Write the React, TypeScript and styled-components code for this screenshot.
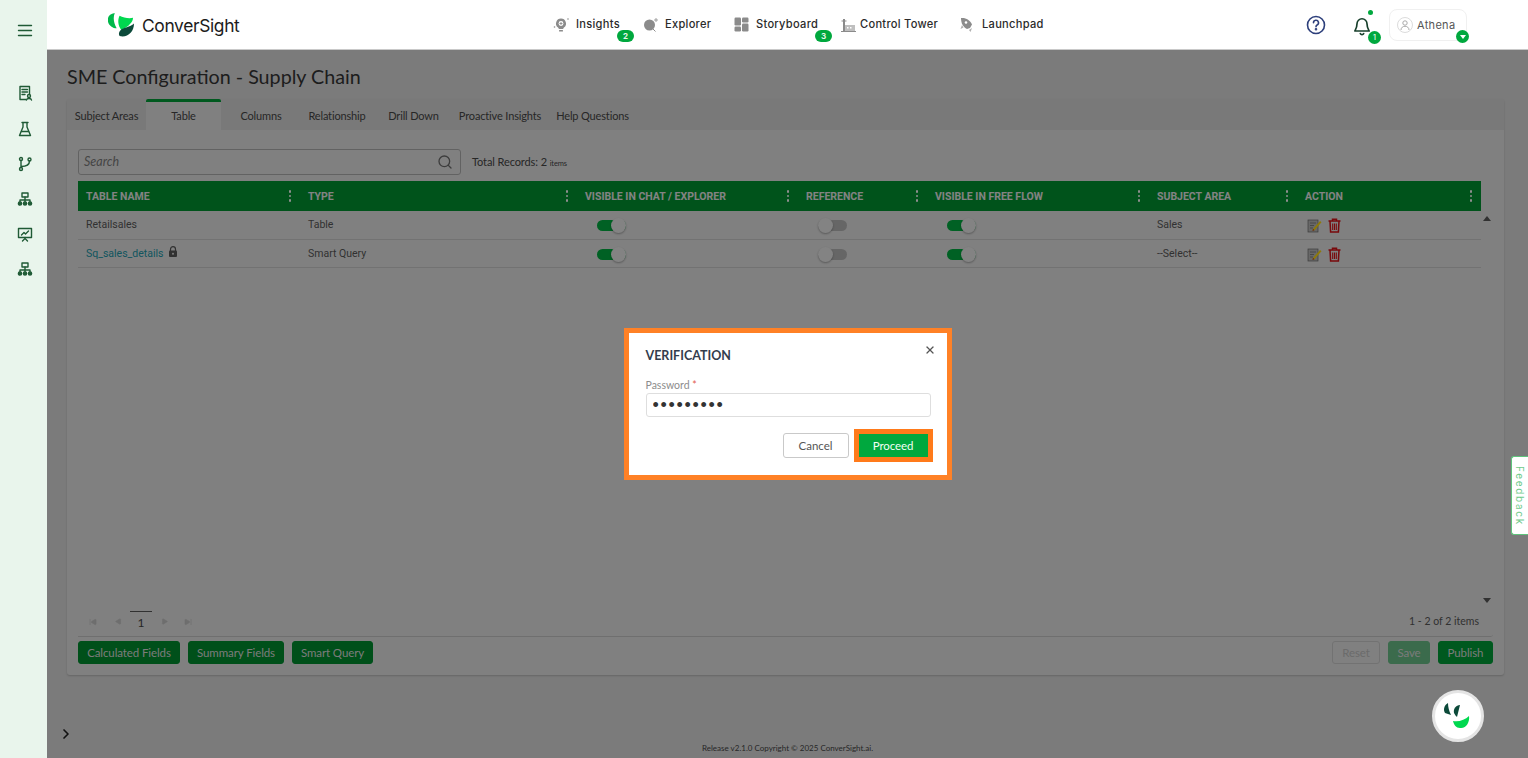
import React from "react";
import styled, { createGlobalStyle } from "styled-components";
import { X, Search, ChevronRight, SkipBack, Play } from "lucide-react";

const GlobalStyle = createGlobalStyle`
  html, body {
    margin: 0;
    padding: 0;
    height: 100%;
    overflow: hidden;
    font-family: "Lato", "Liberation Sans", sans-serif;
  }
  * { box-sizing: border-box; }
`;

const Shell = styled.div`
  display: flex;
  width: 100%;
  height: 100vh;
  position: relative;
`;

const Sidebar = styled.aside`
  width: 47px;
  flex: none;
  background: #e9f5ec;
  display: flex;
  flex-direction: column;
  align-items: center;
  color: #1f5a35;
  padding: 22px 0 0 2px;
`;

const SideIcon = styled.div<{ $top: number }>`
  margin-top: ${(p) => p.$top}px;
  width: 16px;
  height: 16px;
  display: flex;
`;

const Main = styled.div`
  flex: 1;
  display: flex;
  flex-direction: column;
  min-width: 0;
`;

const Header = styled.header`
  height: 50px;
  flex: none;
  background: #fff;
  border-bottom: 1px solid #c9c9c9;
  display: flex;
  align-items: center;
  padding-left: 61px;
  position: relative;
`;

const Brand = styled.div`
  display: flex;
  align-items: center;
  gap: 8px;
  width: 445px;
  flex: none;
`;

const BrandName = styled.span`
  font-family: "Inter", sans-serif;
  font-size: 17.4px;
  color: #1c1c1c;
  letter-spacing: -0.35px;
  margin-top: 2px;
`;

const Nav = styled.nav`
  display: flex;
  align-items: center;
  height: 100%;
`;

const NavItem = styled.div<{ $width: number; $gap?: number }>`
  position: relative;
  display: flex;
  align-items: center;
  width: ${(p) => p.$width}px;
  gap: ${(p) => p.$gap ?? 6}px;
`;

const NavLabel = styled.span`
  font-family: "Inter", sans-serif;
  font-size: 11.1px;
  font-weight: 500;
  letter-spacing: 0.28px;
  color: #2b2b2b;
  white-space: nowrap;
  margin-top: -1px;
`;

const NavIcon = styled.div`
  width: 17px;
  height: 17px;
  flex: none;
  color: #8b8b8b;
  display: flex;
`;

const PillBadge = styled.span<{ $left: number }>`
  position: absolute;
  left: ${(p) => p.$left}px;
  top: 14px;
  background: #00a83e;
  color: #e8f5ea;
  font-family: "Inter", sans-serif;
  font-size: 8px;
  font-weight: 700;
  border-radius: 6px;
  width: 17px;
  height: 12px;
  display: flex;
  align-items: center;
  justify-content: center;
`;

const RightTools = styled.div`
  position: absolute;
  right: 61px;
  top: 0;
  height: 49px;
  display: flex;
  align-items: center;
`;

const HelpButton = styled.div`
  width: 20px;
  height: 20px;
  color: #2d3f7b;
  display: flex;
  margin-right: 26px;
`;

const BellWrap = styled.div`
  position: relative;
  width: 20px;
  height: 20px;
  color: #173f2b;
  margin-right: 17px;
  margin-top: 3px;
`;

const BellDot = styled.span`
  position: absolute;
  top: -6px;
  right: -1px;
  width: 5px;
  height: 5px;
  border-radius: 50%;
  background: #00a83e;
`;

const CountDot = styled.span`
  position: absolute;
  right: -9px;
  top: 15px;
  width: 13px;
  height: 13px;
  border-radius: 50%;
  background: #00a83e;
  color: #dff2e3;
  font-family: "Inter", sans-serif;
  font-size: 7px;
  font-weight: 600;
  display: flex;
  align-items: center;
  justify-content: center;
`;

const UserChip = styled.div`
  position: relative;
  width: 78px;
  height: 32px;
  border: 1px solid #f0f0f0;
  border-radius: 8px;
  display: flex;
  align-items: center;
  padding-left: 7px;
  gap: 4px;
  margin-top: 1px;
`;

const Avatar = styled.div`
  width: 16px;
  height: 16px;
  border-radius: 50%;
  border: 1px solid #dcdcdc;
  color: #a9a9a9;
  display: flex;
  align-items: center;
  justify-content: center;
`;

const UserName = styled.span`
  font-family: "Inter", sans-serif;
  font-size: 11px;
  letter-spacing: 0.3px;
  color: #555;
`;

const Caret = styled.span`
  position: absolute;
  right: -3px;
  bottom: -3px;
  width: 13px;
  height: 13px;
  border-radius: 50%;
  background: #00a83e;
  display: flex;
  align-items: center;
  justify-content: center;
  &::after {
    content: "";
    border-left: 3.5px solid transparent;
    border-right: 3.5px solid transparent;
    border-top: 4.5px solid #fff;
    margin-top: 1px;
  }
`;

const Content = styled.main`
  position: relative;
  flex: 1;
  background: #d4d4d4;
  padding: 14px 24px 0 20px;
  display: flex;
  flex-direction: column;
  min-height: 0;
`;

const Title = styled.h1`
  margin: 0;
  font-size: 19.7px;
  line-height: 25px;
  font-weight: 400;
  color: #333;
  height: 35px;
`;

const Panel = styled.section`
  height: 576px;
  background: #dddddd;
  border-radius: 3px;
  box-shadow: 0 1px 2px rgba(0, 0, 0, 0.18);
  display: flex;
  flex-direction: column;
`;

const TabBar = styled.div`
  height: 31px;
  flex: none;
  background: #d1d1d1;
  display: flex;
`;

const Tab = styled.div<{ $width: number; $active?: boolean }>`
  width: ${(p) => p.$width}px;
  font-size: 11px;
  letter-spacing: -0.15px;
  color: #444;
  display: flex;
  align-items: center;
  justify-content: center;
  white-space: nowrap;
  background: ${(p) => (p.$active ? "#dddddd" : "transparent")};
  border-top: 3px solid ${(p) => (p.$active ? "#009a36" : "transparent")};
  border-top-left-radius: 2px;
  border-top-right-radius: 2px;
  padding-bottom: 1px;
`;

const PanelBody = styled.div`
  flex: 1;
  padding: 19px 11px 11px 11px;
  display: flex;
  flex-direction: column;
  min-height: 0;
  position: relative;
`;

const SearchRow = styled.div`
  display: flex;
  align-items: center;
  gap: 11px;
  height: 26px;
  margin-bottom: 6px;
`;

const SearchBox = styled.div`
  width: 383px;
  height: 26px;
  border: 1px solid #a9a9a9;
  border-radius: 3px;
  background: #dddddd;
  display: flex;
  align-items: center;
  justify-content: space-between;
  padding: 0 7px 0 5px;
  color: #6a6a6a;
`;

const SearchHint = styled.span`
  font-size: 12.5px;
  font-style: italic;
  color: #777;
  margin-top: -1px;
`;

const TotalText = styled.span`
  font-size: 11px;
  letter-spacing: -0.1px;
  color: #444;
  margin-top: -2px;
  small {
    font-size: 7.5px;
  }
`;

const TableGrid = styled.div`
  width: 1403px;
  display: flex;
  flex-direction: column;
  font-family: "Roboto", sans-serif;
`;

const HeadRow = styled.div`
  height: 30px;
  background: #008f30;
  display: grid;
  grid-template-columns: 222px 277px 221px 129px 222px 148px 184px;
  align-items: center;
`;

const HeadCell = styled.div`
  padding: 0 9px 0 8px;
  font-size: 10.5px;
  font-weight: 700;
  color: #e2e2e2;
  display: flex;
  align-items: center;
  justify-content: space-between;
  white-space: nowrap;
`;

const Dots = styled.span`
  display: flex;
  flex-direction: column;
  gap: 2px;
  i {
    width: 2.5px;
    height: 2.5px;
    border-radius: 50%;
    background: #f4f4f4;
  }
`;

const BodyRow = styled.div<{ $height: number; $pad: number }>`
  height: ${(p) => p.$height}px;
  padding-bottom: ${(p) => p.$pad}px;
  display: grid;
  grid-template-columns: 222px 277px 221px 129px 222px 148px 184px;
  align-items: center;
  border-bottom: 1px solid #c4c4c4;
`;

const Cell = styled.div`
  padding: 0 8px;
  font-size: 10.5px;
  color: #555;
  display: flex;
  align-items: center;
  gap: 4px;
`;

const LinkText = styled.span`
  color: #2093a3;
`;

const LockGlyph = styled.svg`
  color: #555;
  margin-top: -4px;
`;

const ToggleCell = styled.div`
  padding: 2px 0 0 20px;
`;

const Toggle = styled.div<{ $on?: boolean }>`
  position: relative;
  width: 29px;
  height: 11px;
  border-radius: 6px;
  background: ${(p) => (p.$on ? "#00a83e" : "#b0b0b0")};
  &::after {
    content: "";
    position: absolute;
    top: -2px;
    left: ${(p) => (p.$on ? "14px" : "0")};
    width: 15px;
    height: 15px;
    border-radius: 50%;
    background: #e2e2e2;
    box-shadow: 0 1px 2px rgba(0, 0, 0, 0.3);
  }
`;

const ActionIcons = styled.div`
  padding: 2px 0 0 10px;
  display: flex;
  gap: 6px;
  align-items: center;
`;

const ScrollArrow = styled.span<{ $down?: boolean; $top: number }>`
  position: absolute;
  right: 13px;
  top: ${(p) => p.$top}px;
  width: 0;
  height: 0;
  border-left: 4px solid transparent;
  border-right: 4px solid transparent;
  ${(p) => (p.$down ? "border-top: 5px solid #555;" : "border-bottom: 5px solid #555;")}
`;

const Spacer = styled.div`
  flex: 1;
`;

const PagerRow = styled.div`
  height: 26px;
  display: flex;
  align-items: flex-start;
  justify-content: space-between;
  border-bottom: 1px solid #c0c0c0;
  border-bottom-right-radius: 3px;
  padding-right: 14px;
`;

const Pager = styled.div`
  display: flex;
  align-items: center;
  color: #bdbdbd;
  height: 21px;
`;

const PagerBtn = styled.span<{ $width: number; $flip?: boolean }>`
  width: ${(p) => p.$width}px;
  display: flex;
  justify-content: center;
  align-items: center;
  svg {
    transform: ${(p) => (p.$flip ? "rotate(180deg)" : "none")};
  }
`;

const PageNumber = styled.span`
  width: 22px;
  height: 21px;
  border-top: 1px solid #555;
  font-size: 12px;
  color: #444;
  text-align: center;
  line-height: 21px;
  margin: 0 1px;
`;

const PageInfo = styled.span`
  font-size: 10.5px;
  color: #555;
  line-height: 21px;
`;

const ActionBar = styled.div`
  display: flex;
  justify-content: space-between;
  margin-top: 4px;
  height: 23px;
`;

const ButtonGroup = styled.div`
  display: flex;
  gap: 8px;
`;

const PanelButton = styled.button<{ $kind?: "solid" | "faded" | "ghost" | "bright"; $width: number }>`
  width: ${(p) => p.$width}px;
  height: 23px;
  padding: 0;
  font-family: inherit;
  font-size: 11.5px;
  letter-spacing: -0.1px;
  border-radius: 3px;
  border: 1px solid
    ${(p) => (p.$kind === "ghost" ? "#c4c4c4" : p.$kind === "faded" ? "#66b884" : p.$kind === "bright" ? "#009a36" : "#008a2e")};
  color: ${(p) => (p.$kind === "ghost" ? "#b8b8b8" : "#d4d4d4")};
  background: ${(p) =>
    p.$kind === "ghost" ? "transparent" : p.$kind === "faded" ? "#66b884" : p.$kind === "bright" ? "#009a36" : "#008a2e"};
`;

const Overlay = styled.div`
  position: absolute;
  inset: 0;
  background: rgba(0, 0, 0, 0.42);
  display: flex;
  align-items: center;
  justify-content: center;
`;

const Modal = styled.div`
  width: 328px;
  height: 152px;
  background: #fff;
  border: 5px solid #ff8126;
  padding: 15px 16px 0 17px;
  position: relative;
  display: flex;
  flex-direction: column;
`;

const ModalTitle = styled.h2`
  margin: 0;
  font-size: 12.5px;
  line-height: 16px;
  font-weight: 700;
  color: #333d4d;
`;

const CloseButton = styled.span`
  position: absolute;
  right: 11px;
  top: 11px;
  color: #555;
  display: flex;
`;

const FieldLabel = styled.label`
  font-size: 10.5px;
  color: #8c8c8c;
  margin-top: 14px;
  line-height: 14px;
  em {
    color: #e2604f;
    font-style: normal;
  }
`;

const PasswordInput = styled.input`
  height: 24px;
  margin-top: 1px;
  width: 100%;
  border: 1px solid #dedede;
  border-radius: 3px;
  padding: 0 6px;
  font-family: "Liberation Sans", sans-serif;
  font-size: 18px;
  letter-spacing: 1.7px;
  color: #333;
  outline: none;
`;

const ModalActions = styled.div`
  display: flex;
  justify-content: flex-end;
  align-items: center;
  gap: 5px;
  margin-top: 12px;
  margin-right: -2px;
`;

const CancelButton = styled.button`
  width: 66px;
  height: 25px;
  padding: 0;
  background: #fff;
  border: 1px solid #c9c9c9;
  border-radius: 3px;
  font-family: inherit;
  font-size: 11.5px;
  color: #555;
`;

const ProceedButton = styled.button`
  width: 79px;
  height: 33px;
  padding: 0;
  background: #00a83e;
  border: 5px solid #ff7a1a;
  font-family: inherit;
  font-size: 11.5px;
  letter-spacing: -0.1px;
  color: #f2fff5;
`;

const Footer = styled.div`
  position: absolute;
  left: 655px;
  bottom: 5px;
  font-size: 8px;
  color: #444;
  white-space: nowrap;
`;

const Expand = styled.span`
  position: absolute;
  left: 58px;
  top: 726px;
  color: #111;
  display: flex;
`;

const FeedbackTab = styled.div`
  position: absolute;
  right: 0;
  top: 456px;
  width: 17px;
  height: 79px;
  background: #fff;
  border: 1px solid #5fc47c;
  border-right: none;
  border-radius: 3px 0 0 3px;
  display: flex;
  align-items: center;
  justify-content: center;
  span {
    writing-mode: vertical-rl;
    font-family: "Inter", sans-serif;
    font-size: 10px;
    letter-spacing: 1.7px;
    color: #6fca8a;
  }
`;

const ChatBubble = styled.div`
  position: absolute;
  left: 1432px;
  top: 690px;
  width: 52px;
  height: 52px;
  border-radius: 50%;
  background: #fff;
  border: 3px solid #e4e4e4;
  display: flex;
  align-items: center;
  justify-content: center;
`;

const Svg: React.FC<{ size?: number; children: React.ReactNode }> = ({ size = 16, children }) => (
  <svg width={size} height={size} viewBox="0 0 16 16" fill="none" stroke="currentColor" strokeWidth={1.4} strokeLinecap="round" strokeLinejoin="round">
    {children}
  </svg>
);

const OrgIcon = () => (
  <Svg>
    <rect x="5" y="2" width="6" height="4" />
    <path d="M8 6v3M3 11V9h10v2M8 9v2" />
    <circle cx="3" cy="12.5" r="1.6" fill="currentColor" />
    <circle cx="8" cy="12.5" r="1.6" fill="currentColor" />
    <circle cx="13" cy="12.5" r="1.6" fill="currentColor" />
  </Svg>
);

const ReportIcon = () => (
  <Svg>
    <path d="M9 14.5H3V1.5h9.5v8" />
    <path d="M5 4.5h5.5M5 7h5.5M5 9.5h3" />
    <circle cx="12" cy="11" r="1.5" />
    <path d="M9.5 15c.3-2 4.700-2 5 0" />
  </Svg>
);

const FlaskIcon = () => (
  <Svg>
    <path d="M5 1.500h6M6 1.500v4.500L2.500 14.500h11L10 6V1.500" />
    <path d="M4.500 10.500h7" />
  </Svg>
);

const BranchIcon = () => (
  <Svg>
    <circle cx="4" cy="3" r="1.5" />
    <circle cx="4" cy="13" r="1.5" />
    <circle cx="12.500" cy="3.500" r="1.5" />
    <path d="M4 4.500v7M4 10.500c5 0 8.500-1 8.500-5.500" />
  </Svg>
);

const BoardIcon = () => (
  <Svg>
    <rect x="1.500" y="2.500" width="13" height="9" />
    <path d="M4.500 9l2.500-2.500 1.500 1.500 3-3M8 11.500v1M5.500 15l2.500-2.500 2.500 2.500" />
  </Svg>
);

const BulbIcon = () => (
  <svg viewBox="0 0 17 17" width="17" height="17" fill="currentColor">
    <path d="M8 2.500a5 5 0 0 0-3 9c.600.500.800 1 .800 1.500h4.400c0-.500.200-1 .800-1.500a5 5 0 0 0-3-9z" />
    <circle cx="8" cy="7.500" r="2.400" fill="#fff" />
    <path d="M8 6v3M6.500 7.500h3" stroke="currentColor" strokeWidth=".9" />
    <rect x="6" y="14" width="4" height="1.500" rx=".6" />
    <circle cx="15" cy="3" r=".8" />
    <circle cx="1.500" cy="11" r=".8" />
  </svg>
);

const ExplorerIcon = () => (
  <svg viewBox="0 0 17 17" width="17" height="17" fill="currentColor">
    <circle cx="7.500" cy="9" r="5.500" />
    <path d="M11 13l2.500 2.500" stroke="currentColor" strokeWidth="1" />
    <path d="M14 2v4M12 4h4" stroke="currentColor" strokeWidth=".8" />
  </svg>
);

const StoryIcon = () => (
  <svg viewBox="0 0 17 17" width="17" height="17" fill="currentColor">
    <rect x="1.500" y="1.500" width="6.500" height="8" rx="1.200" />
    <rect x="9" y="1.500" width="6.500" height="5" rx="1.200" />
    <rect x="1.500" y="10.500" width="6.500" height="5" rx="1.200" />
    <rect x="9" y="7.500" width="6.500" height="8" rx="1.200" />
  </svg>
);

const TowerIcon = () => (
  <svg viewBox="0 0 17 17" width="17" height="17" fill="currentColor">
    <rect x="3" y="3" width="2" height="12" />
    <rect x="1.500" y="4.500" width="5" height="1" />
    <path d="M5 9h10v6H5z" fillOpacity=".55" />
    <rect x="7" y="11" width="1.500" height="1.500" fill="#fff" />
    <rect x="10" y="11" width="1.500" height="1.500" fill="#fff" />
    <rect x="1" y="15" width="15" height="1" />
  </svg>
);

const RocketIcon = () => (
  <svg viewBox="0 0 17 17" width="17" height="17" fill="currentColor">
    <path d="M2 2c5-.500 9 2 11 6.500l-2 3.500-3 1C4 11 2 7 2 2z" />
    <circle cx="7" cy="6.500" r="1.300" fill="#fff" />
    <path d="M3 9l-1.500 4 3-1.500zM10 14l1.500 2 1.500-4z" fillOpacity=".7" />
  </svg>
);

const LogoMark = () => (
  <svg width="26" height="26" viewBox="0 0 27 25">
    <path d="M7 0 C1 1 -1 5 0 9 C1 13 5 16 9 16 C6 11 5 5 7 0z" fill="#00b84a" />
    <path d="M12 3 C16 5 22 6 26 5 C26 10 21 14 14 18 C10 13 10 7 12 3z" fill="#00d84f" />
    <path d="M12 24 C20 26 27 20 27 11 C23 15 16 15 13 18 C11 20 11 22 12 24z" fill="#0c4a3a" />
  </svg>
);

const ChatMark = () => (
  <svg width="30" height="30" viewBox="0 0 30 30">
    <path d="M5 2 C1 4 0 9 2 12 L8 14 C6 10 5 6 5 2z" fill="#0c4a3a" />
    <path d="M17 4 C13 4 10 8 11 12 C12 14 13 15 14 16 C15 12 16 8 17 4z" fill="#0c4a3a" />
    <path d="M10 20 C16 21 22 19 26 15 C27 21 23 28 17 27 C13 27 11 24 10 20z" fill="#00d84f" />
  </svg>
);

const EditIcon = () => (
  <svg width="15" height="15" viewBox="0 0 15 15">
    <rect x="1" y="2" width="10" height="12" fill="#b4b4b4" stroke="#666" strokeWidth=".7" />
    <path d="M3 5h6M3 7.500h4M3 10h3" stroke="#666" strokeWidth=".7" />
    <path d="M6 11l7-8 1.500 1.200-7 8-2 .5z" fill="#f5d20e" />
    <path d="M5.500 12.700l.5-1.700 1.500 1.200z" fill="#a02020" />
  </svg>
);

const TrashIcon = () => (
  <svg width="13" height="15" viewBox="0 0 13 15" fill="none" stroke="#d01015" strokeWidth="1.500">
    <path d="M.5 3h12M4.500 3V1.200h4V3M2 3l.6 11h7.800L11 3" />
    <path d="M4.700 5.500v6.500M6.500 5.500v6.500M8.300 5.500v6.500" strokeWidth="1.100" />
  </svg>
);

const tabs: { label: string; width: number; active?: boolean }[] = [
  { label: "Subject Areas", width: 79 },
  { label: "Table", width: 75, active: true },
  { label: "Columns", width: 80 },
  { label: "Relationship", width: 72 },
  { label: "Drill Down", width: 81 },
  { label: "Proactive Insights", width: 92 },
  { label: "Help Questions", width: 93 },
];

const columns = ["TABLE NAME", "TYPE", "VISIBLE IN CHAT / EXPLORER", "REFERENCE", "VISIBLE IN FREE FLOW", "SUBJECT AREA", "ACTION"];

const rows = [
  { name: "Retailsales", type: "Table", area: "Sales", height: 29, pad: 2, locked: false },
  { name: "Sq_sales_details", type: "Smart Query", area: "--Select--", height: 28, pad: 0, locked: true },
];

const App: React.FC = () => {
  return (
    <Shell>
      <GlobalStyle />
      <Sidebar>
        <SideIcon $top={0}>
          <Svg>
            <path d="M1.500 3.500h13M1.500 8.500h13M1.500 13.500h13" />
          </Svg>
        </SideIcon>
        <SideIcon $top={47}>
          <ReportIcon />
        </SideIcon>
        <SideIcon $top={20}>
          <FlaskIcon />
        </SideIcon>
        <SideIcon $top={19}>
          <BranchIcon />
        </SideIcon>
        <SideIcon $top={19}>
          <OrgIcon />
        </SideIcon>
        <SideIcon $top={19}>
          <BoardIcon />
        </SideIcon>
        <SideIcon $top={19}>
          <OrgIcon />
        </SideIcon>
      </Sidebar>
      <Main>
        <Header>
          <Brand>
            <LogoMark />
            <BrandName>ConverSight</BrandName>
          </Brand>
          <Nav>
            <NavItem $width={89}>
              <NavIcon>
                <BulbIcon />
              </NavIcon>
              <NavLabel>Insights</NavLabel>
              <PillBadge $left={64}>2</PillBadge>
            </NavItem>
            <NavItem $width={91}>
              <NavIcon>
                <ExplorerIcon />
              </NavIcon>
              <NavLabel>Explorer</NavLabel>
            </NavItem>
            <NavItem $width={107}>
              <NavIcon>
                <StoryIcon />
              </NavIcon>
              <NavLabel>Storyboard</NavLabel>
              <PillBadge $left={82}>3</PillBadge>
            </NavItem>
            <NavItem $width={119} $gap={3}>
              <NavIcon>
                <TowerIcon />
              </NavIcon>
              <NavLabel>Control Tower</NavLabel>
            </NavItem>
            <NavItem $width={90}>
              <NavIcon>
                <RocketIcon />
              </NavIcon>
              <NavLabel>Launchpad</NavLabel>
            </NavItem>
          </Nav>
          <RightTools>
            <HelpButton>
              <svg width="20" height="20" viewBox="0 0 20 20" fill="none" stroke="currentColor" strokeWidth="1.600" strokeLinecap="round">
                <circle cx="10" cy="10" r="8.500" />
                <path d="M7.500 7.800a2.500 2.500 0 1 1 3.600 2.200c-.8.400-1.100.9-1.100 1.700" />
                <circle cx="10" cy="14.300" r=".5" fill="currentColor" />
              </svg>
            </HelpButton>
            <BellWrap>
              <svg width="20" height="20" viewBox="0 0 18 18" fill="none" stroke="currentColor" strokeWidth="1.500" strokeLinecap="round" strokeLinejoin="round">
                <path d="M4.500 7a4.500 4.500 0 0 1 9 0c0 4 1.500 5.500 2 6.500h-13c.5-1 2-2.500 2-6.500z" />
                <path d="M7.500 15.800a1.700 1.700 0 0 0 3 0" />
              </svg>
              <BellDot />
              <CountDot>1</CountDot>
            </BellWrap>
            <UserChip>
              <Avatar>
                <svg width="10" height="10" viewBox="0 0 10 10" fill="none" stroke="currentColor" strokeWidth="1">
                  <circle cx="5" cy="3" r="2.200" />
                  <path d="M1 10c0-5 8-5 8 0" />
                </svg>
              </Avatar>
              <UserName>Athena</UserName>
              <Caret />
            </UserChip>
          </RightTools>
        </Header>
        <Content>
          <Title>SME Configuration - Supply Chain</Title>
          <Panel>
            <TabBar>
              {tabs.map((t) => (
                <Tab key={t.label} $width={t.width} $active={t.active}>
                  {t.label}
                </Tab>
              ))}
            </TabBar>
            <PanelBody>
              <SearchRow>
                <SearchBox>
                  <SearchHint>Search</SearchHint>
                  <Search size={16} />
                </SearchBox>
                <TotalText>
                  Total Records: 2 <small>items</small>
                </TotalText>
              </SearchRow>
              <TableGrid>
                <HeadRow>
                  {columns.map((c) => (
                    <HeadCell key={c}>
                      {c}
                      <Dots>
                        <i />
                        <i />
                        <i />
                      </Dots>
                    </HeadCell>
                  ))}
                </HeadRow>
                {rows.map((r) => (
                  <BodyRow key={r.name} $height={r.height} $pad={r.pad}>
                    <Cell>
                      {r.locked ? <LinkText>{r.name}</LinkText> : r.name}
                      {r.locked && (
                        <LockGlyph width="10" height="11" viewBox="0 0 10 11">
                          <path d="M2.500 5V3.200a2.500 2.500 0 0 1 5 0V5" fill="none" stroke="currentColor" strokeWidth="1.200" />
                          <rect x="1" y="4.500" width="8" height="6.500" rx="1" fill="currentColor" />
                          <circle cx="5" cy="7.700" r="1" fill="#ddd" />
                        </LockGlyph>
                      )}
                    </Cell>
                    <Cell>{r.type}</Cell>
                    <ToggleCell>
                      <Toggle $on />
                    </ToggleCell>
                    <ToggleCell>
                      <Toggle />
                    </ToggleCell>
                    <ToggleCell>
                      <Toggle $on />
                    </ToggleCell>
                    <Cell>{r.area}</Cell>
                    <ActionIcons>
                      <EditIcon />
                      <TrashIcon />
                    </ActionIcons>
                  </BodyRow>
                ))}
              </TableGrid>
              <ScrollArrow $top={86} />
              <ScrollArrow $top={468} $down />
              <Spacer />
              <PagerRow>
                <Pager>
                  <PagerBtn $width={29}>
                    <SkipBack size={8} fill="currentColor" />
                  </PagerBtn>
                  <PagerBtn $width={22} $flip>
                    <Play size={7} fill="currentColor" />
                  </PagerBtn>
                  <PageNumber>1</PageNumber>
                  <PagerBtn $width={22}>
                    <Play size={7} fill="currentColor" />
                  </PagerBtn>
                  <PagerBtn $width={26} $flip>
                    <SkipBack size={8} fill="currentColor" />
                  </PagerBtn>
                </Pager>
                <PageInfo>1 - 2 of 2 items</PageInfo>
              </PagerRow>
              <ActionBar>
                <ButtonGroup>
                  <PanelButton $width={102}>Calculated Fields</PanelButton>
                  <PanelButton $width={96}>Summary Fields</PanelButton>
                  <PanelButton $width={81}>Smart Query</PanelButton>
                </ButtonGroup>
                <ButtonGroup>
                  <PanelButton $kind="ghost" $width={48}>
                    Reset
                  </PanelButton>
                  <PanelButton $kind="faded" $width={42}>
                    Save
                  </PanelButton>
                  <PanelButton $kind="bright" $width={55}>
                    Publish
                  </PanelButton>
                </ButtonGroup>
              </ActionBar>
            </PanelBody>
          </Panel>
          <Footer>Release v2.1.0 Copyright © 2025 ConverSight.ai.</Footer>
          <Overlay>
            <Modal>
              <ModalTitle>VERIFICATION</ModalTitle>
              <CloseButton>
                <X size={12} strokeWidth={2.500} />
              </CloseButton>
              <FieldLabel>
                Password <em>*</em>
              </FieldLabel>
              <PasswordInput type="password" defaultValue="123456789" readOnly />
              <ModalActions>
                <CancelButton>Cancel</CancelButton>
                <ProceedButton>Proceed</ProceedButton>
              </ModalActions>
            </Modal>
          </Overlay>
        </Content>
      </Main>
      <Expand>
        <ChevronRight size={16} strokeWidth={2.500} />
      </Expand>
      <FeedbackTab>
        <span>Feedback</span>
      </FeedbackTab>
      <ChatBubble>
        <ChatMark />
      </ChatBubble>
    </Shell>
  );
};

export default App;
